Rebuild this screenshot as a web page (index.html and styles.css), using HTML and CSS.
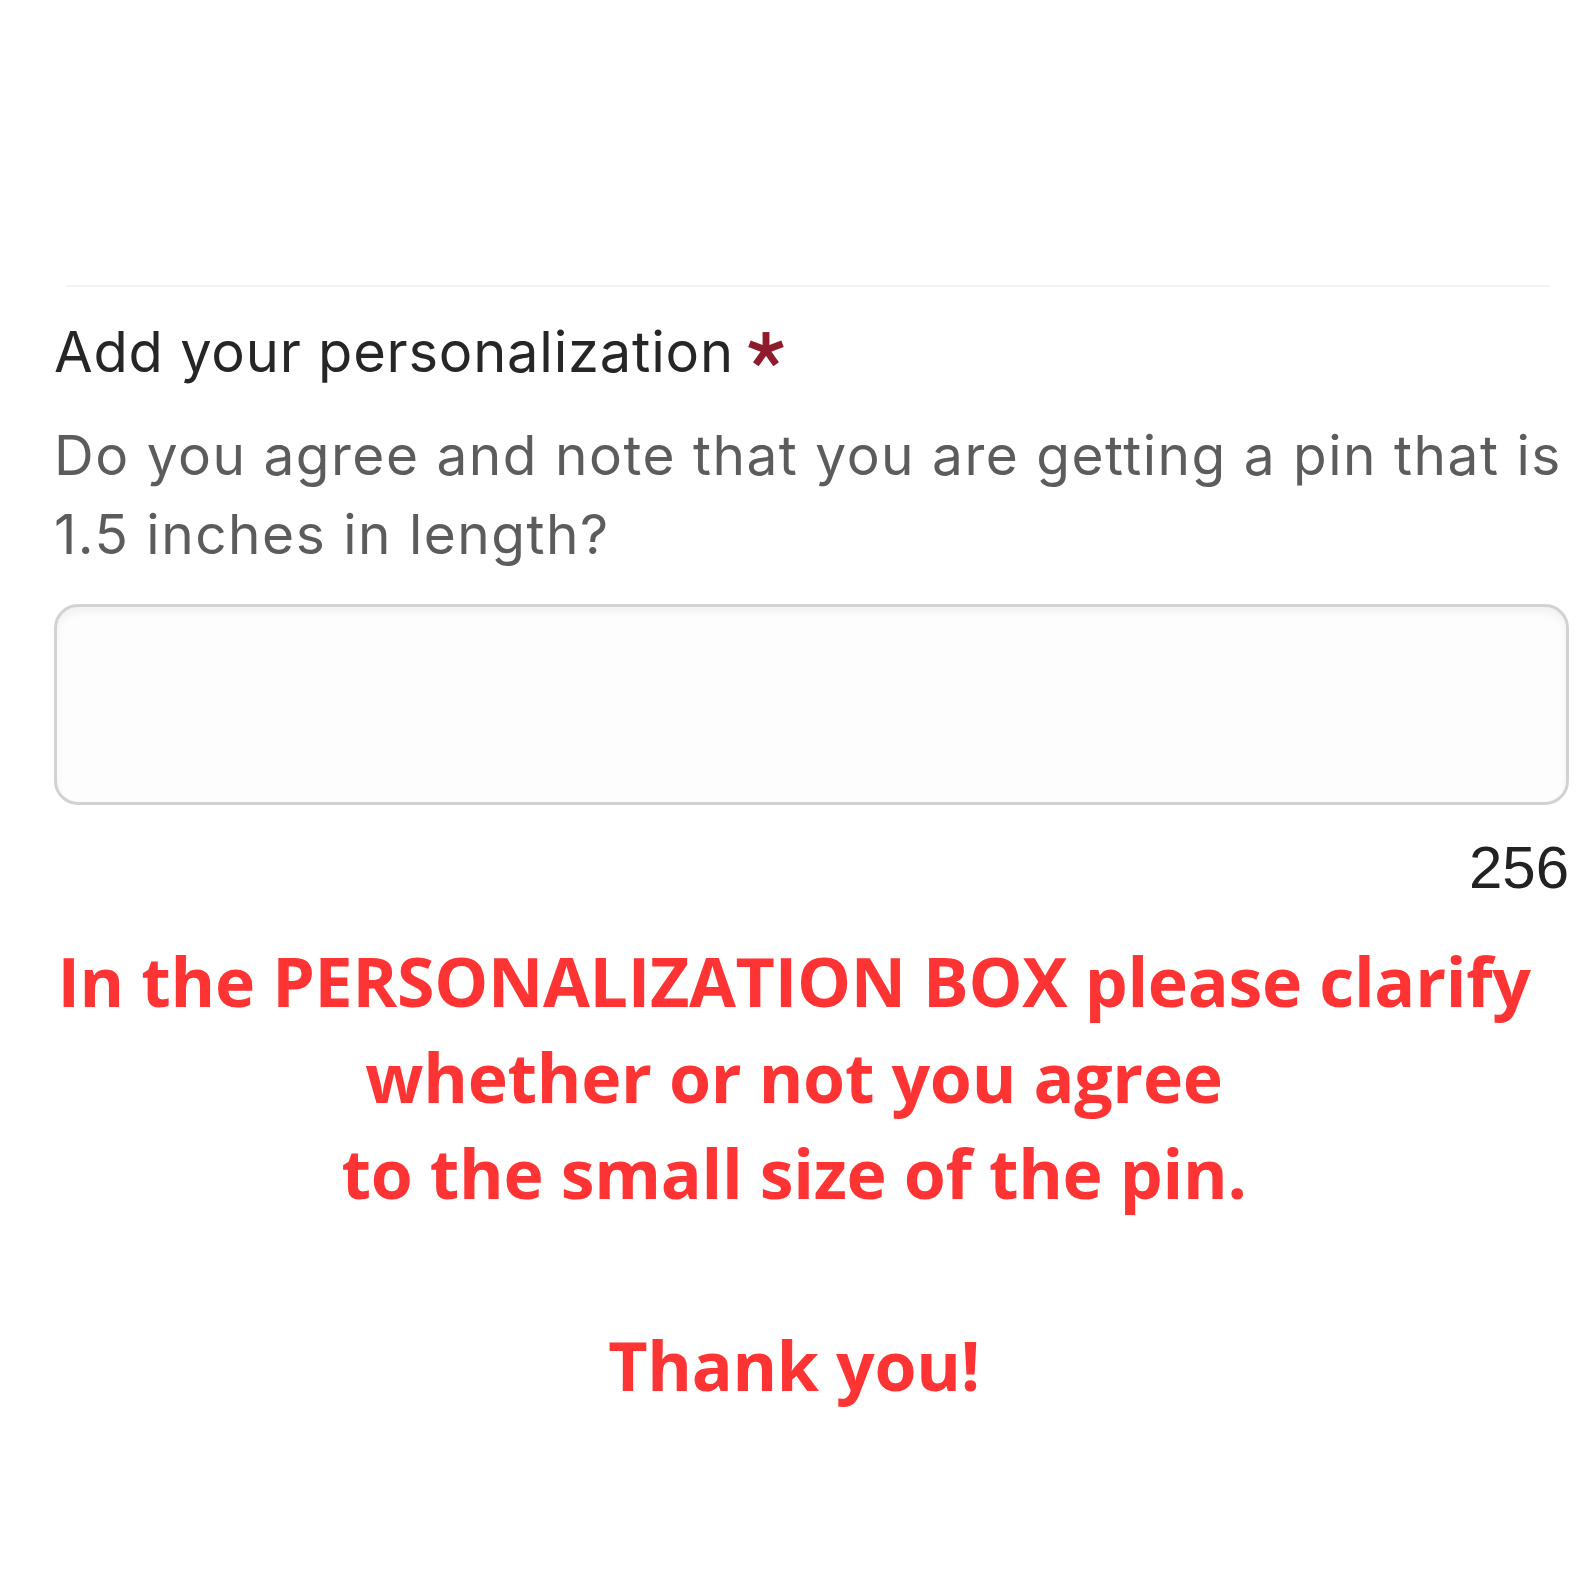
FILE: index.html
```html
<!DOCTYPE html>
<html lang="en">
<head>
<meta charset="utf-8">
<title>Add your personalization</title>
<link rel="stylesheet" href="styles.css">
</head>
<body>
<main class="page">
  <section class="form">
    <hr class="divider">
    <label class="label" for="pers">
      <span>Add your personalization</span>
      <svg class="req" viewBox="0 0 34 34" aria-hidden="true">
        <g stroke="#8e1c2d" stroke-width="6.5" stroke-linecap="butt">
          <line x1="17" y1="18" x2="17" y2="1"/>
          <line x1="17" y1="18" x2="32.6" y2="12.1"/>
          <line x1="17" y1="18" x2="26.6" y2="31.5"/>
          <line x1="17" y1="18" x2="7.4" y2="31.5"/>
          <line x1="17" y1="18" x2="1.4" y2="12.1"/>
        </g>
      </svg>
    </label>
    <p class="instructions">Do you agree and note that you are getting a pin that is 1.5 inches in length?</p>
    <textarea id="pers" class="box"></textarea>
    <div class="counter">256</div>
  </section>
  <section class="notice">
    <p>In the PERSONALIZATION BOX please clarify<br>whether or not you agree<br>to the small size of the pin.</p>
    <p class="thanks">Thank you!</p>
  </section>
</main>
</body>
</html>
```
FILE: styles.css
```css
html, body {
  margin: 0;
  padding: 0;
  background: #ffffff;
}

.page {
  width: 1588px;
  min-height: 1588px;
  padding-top: 285px;
  box-sizing: border-box;
}

.form {
  padding: 0 19px 0 54px;
}

.divider {
  margin: 0 19px 0 12px;
  height: 2px;
  border: 0;
  background: #f3f3f3;
}

.label {
  display: flex;
  align-items: flex-start;
  margin-top: 31px;
  font-family: "Inter", "Liberation Sans", sans-serif;
  font-size: 56px;
  line-height: 68px;
  letter-spacing: 0.8px;
  color: #262626;
}

.req {
  width: 36px;
  height: 36px;
  margin: 13px 0 0 14px;
}

.instructions {
  margin: 30px 0 0;
  font-family: "Inter", "Liberation Sans", sans-serif;
  font-size: 55px;
  line-height: 79px;
  letter-spacing: 1.5px;
  color: #5c5c5c;
}

.box {
  display: block;
  width: 100%;
  height: 201px;
  margin-top: 30px;
  box-sizing: border-box;
  border: 3px solid #d2d2d2;
  border-radius: 24px;
  background: #fdfdfd;
  box-shadow: inset 0 5px 8px rgba(0, 0, 0, 0.05);
  resize: none;
  outline: none;
}

.counter {
  margin-top: 31px;
  text-align: right;
  font-family: "Liberation Sans", Arial, sans-serif;
  font-size: 60px;
  line-height: 64px;
  color: #222222;
}

.notice {
  margin-top: 33px;
  text-align: center;
  font-family: "Open Sans", "Liberation Sans", sans-serif;
  font-weight: 700;
  font-size: 68px;
  line-height: 96px;
  letter-spacing: -0.3px;
  color: #fe3434;
}

.notice p {
  margin: 0;
}

.notice .thanks {
  margin-top: 96px;
}
```
